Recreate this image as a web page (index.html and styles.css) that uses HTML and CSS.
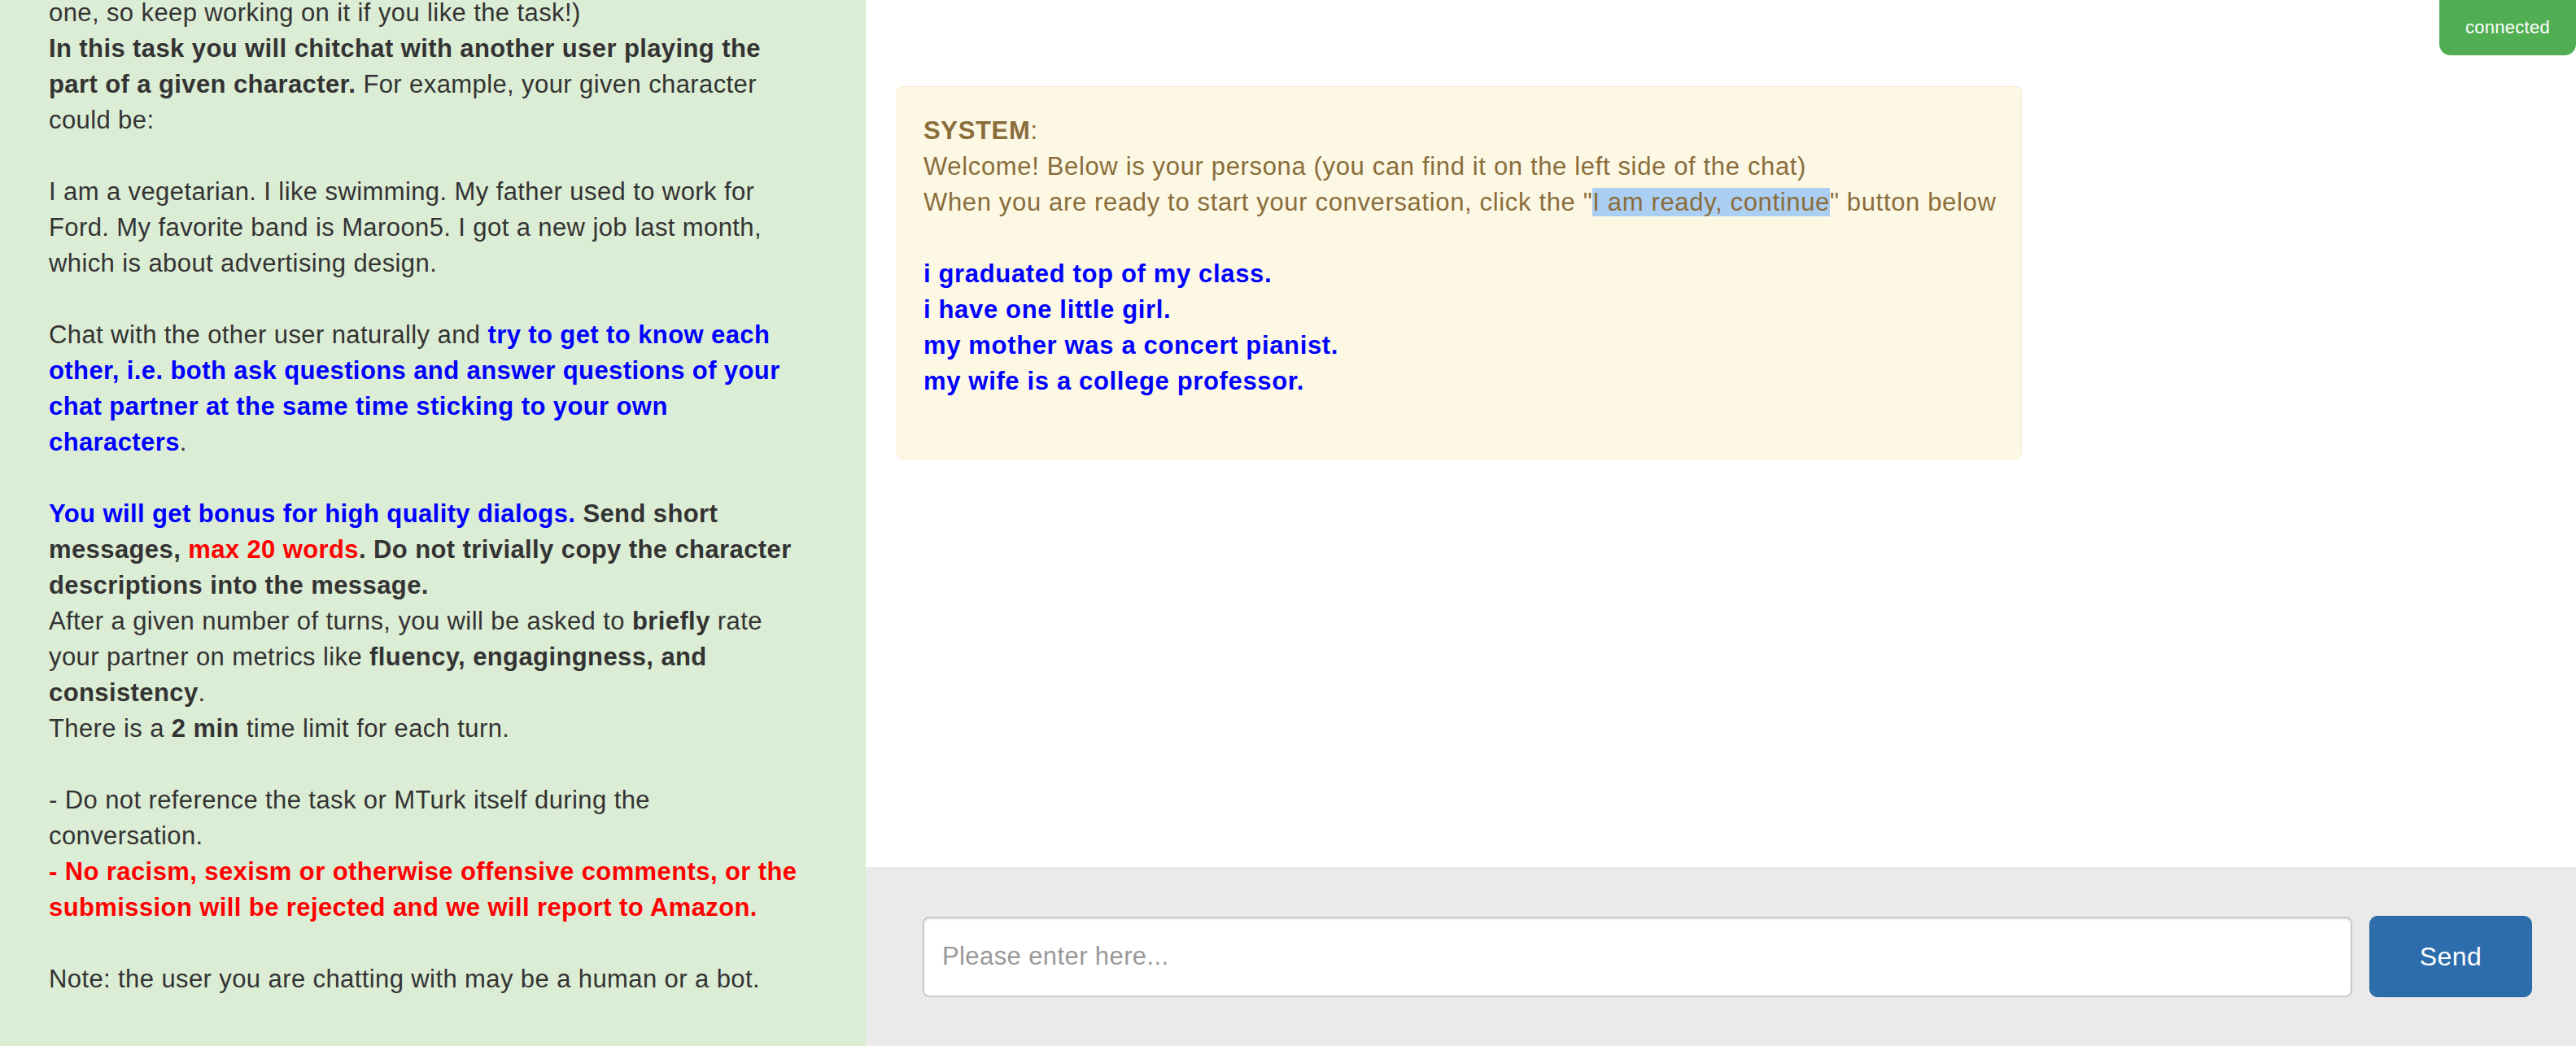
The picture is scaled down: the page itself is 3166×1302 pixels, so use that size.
FILE: index.html
```html
<!DOCTYPE html>
<html lang="en">
<head>
<meta charset="utf-8">
<title>Chat task</title>
<link rel="stylesheet" href="styles.css">
</head>
<body>
<div class="app">
  <aside class="instructions">
    <div class="instructions-inner">
      <p class="para">one, so keep working on it if you like the task!)<br>
        <b>In this task you will chitchat with another user playing the part of a given character.</b> For example, your given character could be:</p>
      <p class="para">I am a vegetarian. I like swimming. My father used to work for Ford. My favorite band is Maroon5. I got a new job last month, which is about advertising design.</p>
      <p class="para">Chat with the other user naturally and <b class="blue">try to get to know each other, i.e. both ask questions and answer questions of your chat partner at the same time sticking to your own characters</b>.</p>
      <p class="para"><b class="blue">You will get bonus for high quality dialogs.</b> <b>Send short messages, <span class="red">max 20 words</span>. Do not trivially copy the character descriptions into the message.</b><br>
        After a given number of turns, you will be asked to <b>briefly</b> rate your partner on metrics like <b>fluency, engagingness, and consistency</b>.<br>
        There is a <b>2 min</b> time limit for each turn.</p>
      <p class="para">- Do not reference the task or MTurk itself during the conversation.<br>
        <b class="red">- No racism, sexism or otherwise offensive comments, or the submission will be rejected and we will report to Amazon.</b></p>
      <p class="para">Note: the user you are chatting with may be a human or a bot.</p>
    </div>
  </aside>
  <main class="chat">
    <div class="status">connected</div>
    <div class="messages">
      <div class="alert">
        <b>SYSTEM</b>:<br>
        Welcome! Below is your persona (you can find it on the left side of the chat)<br>
        When you are ready to start your conversation, click the "<span class="selected">I am ready, continue</span>" button below<br>
        <br>
        <b class="blue">i graduated top of my class.<br>
        i have one little girl.<br>
        my mother was a concert pianist.<br>
        my wife is a college professor.</b>
      </div>
    </div>
    <div class="composer">
      <input class="composer-input" type="text" placeholder="Please enter here...">
      <button class="send" type="button">Send</button>
    </div>
  </main>
</div>
</body>
</html>
```

FILE: styles.css
```css
html, body {
  margin: 0;
  padding: 0;
  background: #fff;
}

body {
  font-family: "Liberation Sans", Arial, Helvetica, sans-serif;
  font-size: 31px;
  line-height: 44px;
  letter-spacing: 0.4px;
  color: #333;
}

.app {
  display: flex;
  height: 1286px;
}

.instructions {
  flex: none;
  width: 1064px;
  box-sizing: border-box;
  padding: 0 69px 0 60px;
  background: #dcedd5;
  overflow: hidden;
}

.instructions-inner {
  margin-top: -6px;
}

.para {
  margin: 0 0 44px;
}

.blue {
  color: #0000ff;
}

.red {
  color: #ff0000;
}

.chat {
  flex: 1;
  display: flex;
  flex-direction: column;
  position: relative;
  min-width: 0;
}

.status {
  position: absolute;
  top: -14px;
  right: 0;
  width: 168px;
  height: 82px;
  box-sizing: border-box;
  padding-top: 14px;
  display: flex;
  align-items: center;
  justify-content: center;
  background: #51ae53;
  color: #fff;
  font-size: 22px;
  line-height: 1;
  letter-spacing: 0.3px;
  border-radius: 14px;
}

.messages {
  flex: 1;
  padding: 106px 0 0 38px;
}

.alert {
  width: fit-content;
  background: #fcf8e3;
  border: 1px solid #faebcc;
  border-radius: 8px;
  color: #8a6d3b;
  letter-spacing: 0.65px;
  padding: 32px 31px 73px 32px;
}

.selected {
  background: #abcff2;
}

.composer {
  flex: none;
  height: 220px;
  box-sizing: border-box;
  display: flex;
  align-items: center;
  gap: 21px;
  padding: 0 54px 0 70px;
  background: #eaeaea;
}

.composer-input {
  flex: 1;
  min-width: 0;
  height: 99px;
  box-sizing: border-box;
  margin: 0;
  padding: 0 22px;
  border: 2px solid #c9c9c9;
  border-radius: 8px;
  background: #fff;
  box-shadow: inset 0 2px 2px rgba(0, 0, 0, 0.075);
  font-family: "Liberation Sans", Arial, sans-serif;
  font-size: 31px;
  letter-spacing: 0.4px;
  color: #555;
  outline: none;
}

.composer-input::placeholder {
  color: #999;
}

.send {
  flex: none;
  width: 200px;
  height: 100px;
  margin: 0;
  box-sizing: border-box;
  border: 1px solid #2a64a0;
  border-radius: 10px;
  background: #2e6dab;
  color: #fff;
  font-family: "Liberation Sans", Arial, sans-serif;
  font-size: 32px;
  letter-spacing: 0.4px;
}
```
